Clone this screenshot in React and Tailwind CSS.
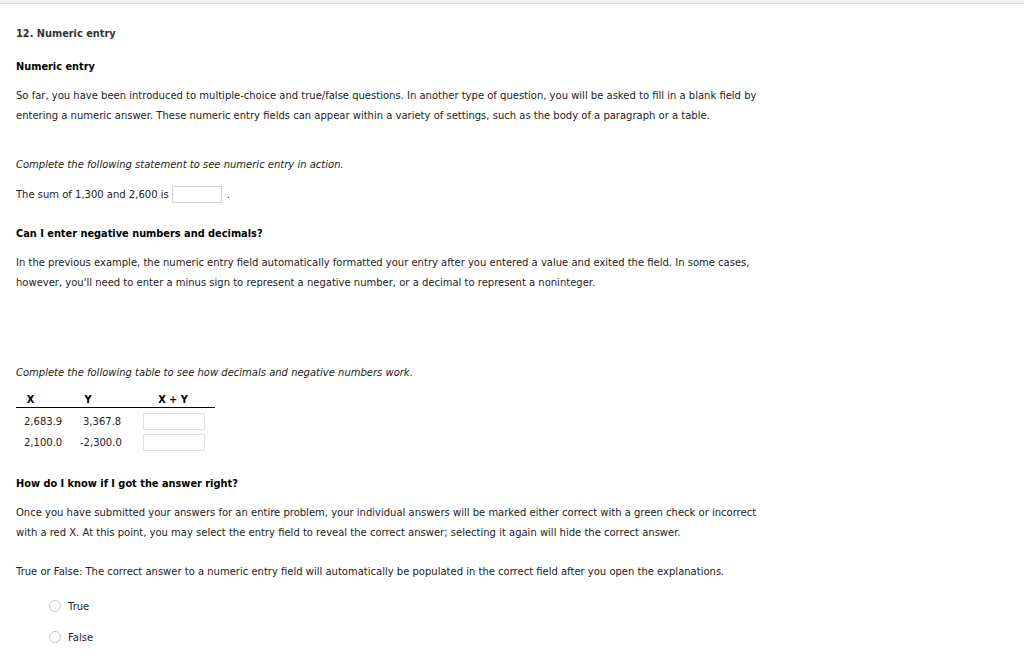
import React from "react";

const font = { fontFamily: '"DejaVu Sans", Verdana, sans-serif' };

function Radio({ label }) {
  return (
    <div className="flex items-center gap-[7px] h-[20px]">
      <span className="w-[12px] h-[12px] rounded-full border border-[#c8c8c8] bg-white shrink-0" />
      <span>{label}</span>
    </div>
  );
}

export default function App() {
  return (
    <div className="w-[1024px] h-[667px] bg-white text-[#222] text-[10px] overflow-hidden" style={font}>
      <div className="h-[4px] bg-[#f3f3f3] border-b border-[#dcdcdc]" />
      <div className="pl-[16px]">
        <div className="mt-[23px] h-[14px] leading-[14px] text-[9.8px] font-bold text-[#333]">12. Numeric entry</div>
        <div className="mt-[19px] h-[14px] leading-[14px] text-[9.8px] font-bold text-black">Numeric entry</div>
        <div className="mt-[12px] leading-[19.5px] w-[755px]">
          So far, you have been introduced to multiple-choice and true/false questions. In another type of question, you will be asked to fill in a blank field by entering a numeric answer. These numeric entry fields can appear within a variety of settings, such as the body of a paragraph or a table.
        </div>
        <div className="mt-[33px] h-[14px] leading-[14px] italic">Complete the following statement to see numeric entry in action.</div>
        <div className="mt-[13px] flex items-center h-[18px]">
          <span>The sum of 1,300 and 2,600 is</span>
          <span className="ml-[3px] w-[50px] h-[17px] border border-[#d4d4d4] bg-white" />
          <span className="ml-[5px]">.</span>
        </div>
        <div className="mt-[24px] h-[14px] leading-[14px] text-[9.8px] font-bold text-black">Can I enter negative numbers and decimals?</div>
        <div className="mt-[12px] leading-[19.5px] w-[755px]">
          In the previous example, the numeric entry field automatically formatted your entry after you entered a value and exited the field. In some cases, however, you'll need to enter a minus sign to represent a negative number, or a decimal to represent a noninteger.
        </div>
        <div className="mt-[74px] h-[14px] leading-[14px] italic">Complete the following table to see how decimals and negative numbers work.</div>
        <div className="mt-[13px] w-[199px]">
          <div className="flex h-[15px] leading-[14px] text-[9.8px] font-bold text-black border-b border-black">
            <div className="w-[29px] text-center">X</div>
            <div className="w-[86px] text-center">Y</div>
            <div className="w-[84px] text-center">X + Y</div>
          </div>
          <div className="flex items-center h-[21px] mt-[3px]">
            <div className="w-[59px] pl-[8px]">2,683.9</div>
            <div className="w-[68px] pl-[8px]">3,367.8</div>
            <div className="w-[62px] h-[17px] border border-[#e2e2e2] bg-white" />
          </div>
          <div className="flex items-center h-[21px]">
            <div className="w-[59px] pl-[8px]">2,100.0</div>
            <div className="w-[68px] pl-[5px]">-2,300.0</div>
            <div className="w-[62px] h-[17px] border border-[#e2e2e2] bg-white" />
          </div>
        </div>
        <div className="mt-[24px] h-[14px] leading-[14px] text-[9.8px] font-bold text-black">How do I know if I got the answer right?</div>
        <div className="mt-[12px] leading-[19.5px] w-[755px]">
          Once you have submitted your answers for an entire problem, your individual answers will be marked either correct with a green check or incorrect with a red X. At this point, you may select the entry field to reveal the correct answer; selecting it again will hide the correct answer.
        </div>
        <div className="mt-[23px] h-[14px] leading-[14px]">True or False: The correct answer to a numeric entry field will automatically be populated in the correct field after you open the explanations.</div>
        <div className="mt-[17px] pl-[33px] flex flex-col gap-[11px]">
          <Radio label="True" />
          <Radio label="False" />
        </div>
      </div>
    </div>
  );
}
